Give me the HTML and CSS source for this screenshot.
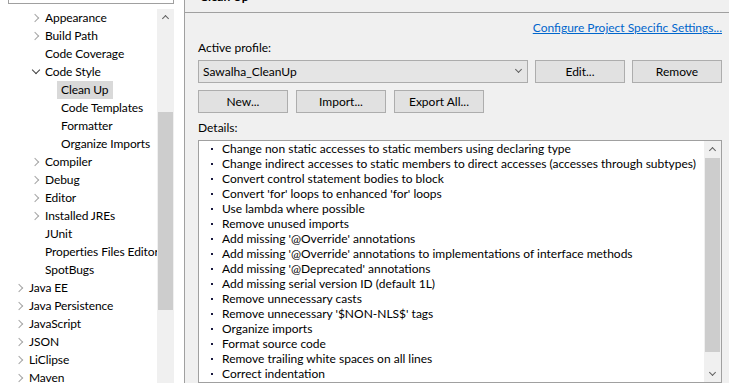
FILE: index.html
```html
<!DOCTYPE html>
<html>
<head>
<meta charset="utf-8">
<link rel="stylesheet" href="styles.css">
</head>
<body>
<div class="win">
  <aside class="nav">
    <div class="filter"></div>
    <div class="tree-wrap">
      <ul class="tree">
        <li class="row l1"><span class="tw closed"></span><span class="lbl">Appearance</span></li>
        <li class="row l1"><span class="tw closed"></span><span class="lbl">Build Path</span></li>
        <li class="row l1"><span class="tw"></span><span class="lbl">Code Coverage</span></li>
        <li class="row l1"><span class="tw open"></span><span class="lbl">Code Style</span></li>
        <li class="row l2"><span class="tw"></span><span class="lbl sel">Clean Up</span></li>
        <li class="row l2"><span class="tw"></span><span class="lbl">Code Templates</span></li>
        <li class="row l2"><span class="tw"></span><span class="lbl">Formatter</span></li>
        <li class="row l2"><span class="tw"></span><span class="lbl">Organize Imports</span></li>
        <li class="row l1"><span class="tw closed"></span><span class="lbl">Compiler</span></li>
        <li class="row l1"><span class="tw closed"></span><span class="lbl">Debug</span></li>
        <li class="row l1"><span class="tw closed"></span><span class="lbl">Editor</span></li>
        <li class="row l1"><span class="tw closed"></span><span class="lbl">Installed JREs</span></li>
        <li class="row l1"><span class="tw"></span><span class="lbl">JUnit</span></li>
        <li class="row l1"><span class="tw"></span><span class="lbl">Properties Files Editor</span></li>
        <li class="row l1"><span class="tw"></span><span class="lbl">SpotBugs</span></li>
        <li class="row l0"><span class="tw closed"></span><span class="lbl">Java EE</span></li>
        <li class="row l0"><span class="tw closed"></span><span class="lbl">Java Persistence</span></li>
        <li class="row l0"><span class="tw closed"></span><span class="lbl">JavaScript</span></li>
        <li class="row l0"><span class="tw closed"></span><span class="lbl">JSON</span></li>
        <li class="row l0"><span class="tw closed"></span><span class="lbl">LiClipse</span></li>
        <li class="row l0"><span class="tw closed"></span><span class="lbl">Maven</span></li>
      </ul>
      <div class="vscroll tree-scroll">
        <div class="arrow up"></div>
        <div class="thumb"></div>
      </div>
    </div>
  </aside>
  <main class="page">
    <header class="title"><h1>Clean Up</h1></header>
    <div class="content">
      <div class="link-row"><a class="link" href="#">Configure Project Specific Settings...</a></div>
      <div class="label">Active profile:</div>
      <div class="profile-row">
        <div class="combo"><span>Sawalha_CleanUp</span><span class="combo-arrow"></span></div>
        <button class="btn">Edit...</button>
        <button class="btn">Remove</button>
      </div>
      <div class="btn-row">
        <button class="btn">New...</button>
        <button class="btn">Import...</button>
        <button class="btn">Export All...</button>
      </div>
      <div class="label details-label">Details:</div>
      <div class="details">
        <ul class="items">
          <li>Change non static accesses to static members using declaring type</li>
          <li>Change indirect accesses to static members to direct accesses (accesses through subtypes)</li>
          <li>Convert control statement bodies to block</li>
          <li>Convert 'for' loops to enhanced 'for' loops</li>
          <li>Use lambda where possible</li>
          <li>Remove unused imports</li>
          <li>Add missing '@Override' annotations</li>
          <li>Add missing '@Override' annotations to implementations of interface methods</li>
          <li>Add missing '@Deprecated' annotations</li>
          <li>Add missing serial version ID (default 1L)</li>
          <li>Remove unnecessary casts</li>
          <li>Remove unnecessary '$NON-NLS$' tags</li>
          <li>Organize imports</li>
          <li>Format source code</li>
          <li>Remove trailing white spaces on all lines</li>
          <li>Correct indentation</li>
        </ul>
        <div class="vscroll list-scroll">
          <div class="arrow up"></div>
          <div class="thumb"></div>
          <div class="spacer"></div>
          <div class="arrow down"></div>
        </div>
      </div>
    </div>
  </main>
</div>
</body>
</html>
```

FILE: styles.css
```css
* { box-sizing: border-box; }
html, body { margin: 0; padding: 0; }
body {
  width: 729px;
  height: 383px;
  overflow: hidden;
  font-family: "Lato", "Noto Sans", sans-serif;
  font-size: 12px;
  color: #000;
  background: #f0f0f0;
}
.win { display: flex; height: 383px; }

/* left navigation */
.nav {
  width: 185px;
  flex: none;
  background: #fff;
  border-right: 1px solid #a0a0a0;
  display: flex;
  flex-direction: column;
}
.filter {
  margin-left: 8px;
  width: 166px;
  height: 4px;
  border: 1px solid #a0a0a0;
  border-top: none;
}
.tree-wrap {
  margin-top: 5px;
  display: flex;
  flex: 1;
  min-height: 0;
}
.tree {
  list-style: none;
  margin: 0;
  padding: 0;
  width: 157px;
  overflow: hidden;
  white-space: nowrap;
}
.row {
  height: 18px;
  display: flex;
  align-items: center;
}
.row.l0 { padding-left: 13px; }
.row.l1 { padding-left: 29px; }
.row.l2 { padding-left: 45px; }
.tw {
  width: 16px;
  height: 18px;
  flex: none;
  position: relative;
}
.tw.closed::before {
  content: "";
  position: absolute;
  left: 3px;
  top: 6px;
  width: 5px;
  height: 5px;
  border-right: 1.5px solid #a6a6a6;
  border-bottom: 1.5px solid #a6a6a6;
  transform: rotate(-45deg);
}
.tw.open::before {
  content: "";
  position: absolute;
  left: 4px;
  top: 4px;
  width: 5px;
  height: 5px;
  border-right: 1.5px solid #404040;
  border-bottom: 1.5px solid #404040;
  transform: rotate(45deg);
}
.lbl {
  line-height: 18px;
  padding: 0 4px;
  margin-left: -4px;
  letter-spacing: -0.1px;
}
.lbl.sel { background: #d9d9d9; }

/* scrollbars */
.vscroll {
  width: 17px;
  flex: none;
  background: #f0f0f0;
  display: flex;
  flex-direction: column;
}
.arrow {
  height: 17px;
  flex: none;
  position: relative;
}
.arrow::before {
  content: "";
  position: absolute;
  left: 6px;
  width: 4px;
  height: 4px;
  border-left: 1.5px solid #606060;
  border-top: 1.5px solid #606060;
}
.arrow.up::before { top: 7px; transform: rotate(45deg); }
.arrow.down::before { top: 5px; transform: rotate(-135deg); }
.thumb {
  background: #cdcdcd;
  margin: 0 1px;
  flex: none;
}
.tree-scroll .thumb { margin-top: 86px; height: 198px; }
.list-scroll .thumb { height: 194px; }
.spacer { flex: 1; }

/* right page */
.page {
  flex: 1;
  display: flex;
  flex-direction: column;
  min-width: 0;
}
.title {
  height: 13px;
  overflow: hidden;
  border-bottom: 1px solid #a0a0a0;
  flex: none;
}
.title h1 {
  margin: -11px 0 0 15px;
  font-size: 12px;
  font-weight: bold;
  line-height: 16px;
}
.content {
  padding: 7px 7px 0 13px;
  display: flex;
  flex-direction: column;
  flex: 1;
  min-height: 0;
}
.link-row { text-align: right; line-height: 15px; }
.link { color: #0066cc; text-decoration: underline; }
.label { line-height: 15px; margin-top: 5px; }
.details-label { margin-top: 7px; }
.profile-row {
  display: flex;
  gap: 7px;
  margin-top: 5px;
  height: 23px;
}
.combo {
  flex: 1;
  background: #e5e5e5;
  border: 1px solid #acacac;
  display: flex;
  align-items: center;
  padding-left: 4px;
  position: relative;
}
.combo-arrow {
  position: absolute;
  right: 6px;
  top: 6px;
  width: 5px;
  height: 5px;
  border-right: 1px solid #606060;
  border-bottom: 1px solid #606060;
  transform: rotate(45deg);
}
.btn {
  width: 90px;
  height: 23px;
  flex: none;
  background: #e1e1e1;
  border: 1px solid #adadad;
  font: inherit;
  color: #000;
  padding: 0;
}
.btn-row {
  display: flex;
  gap: 8px;
  margin-top: 7px;
  height: 23px;
}
.details {
  margin-top: 5px;
  height: 243px;
  background: #fff;
  border: 1px solid #a0a0a0;
  display: flex;
}
.items {
  list-style: none;
  margin: 0;
  padding: 0 0 0 23px;
  flex: 1;
  white-space: nowrap;
  overflow: hidden;
}
.items li {
  line-height: 15px;
  position: relative;
}
.items li::before {
  content: "";
  position: absolute;
  left: -11px;
  top: 7px;
  width: 2px;
  height: 2px;
  background: #1a1a40;
}
```
